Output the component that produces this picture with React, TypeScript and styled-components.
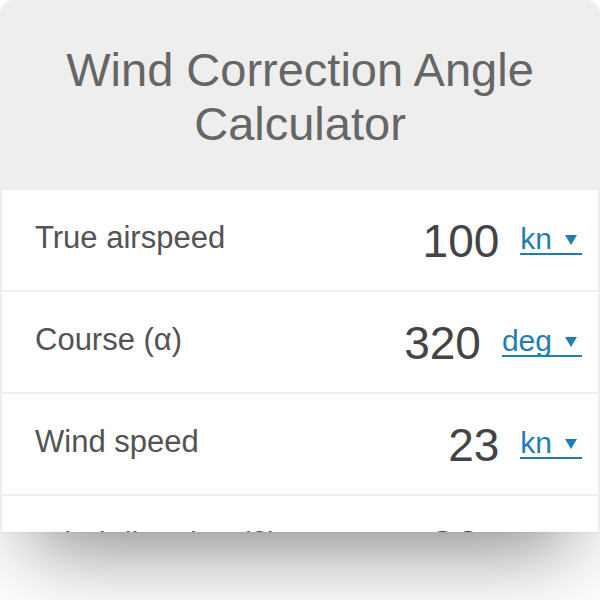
import React from 'react'
import styled, { createGlobalStyle } from 'styled-components'

const GlobalStyle = createGlobalStyle`
  html, body {
    margin: 0;
    padding: 0;
    background: #ffffff;
  }
  body {
    font-family: "Liberation Sans", Arial, sans-serif;
  }
`

const Page = styled.div`
  width: 600px;
  height: 600px;
  overflow: hidden;
  background: #ffffff;
`

const Card = styled.div`
  height: 532px;
  overflow: hidden;
  background: #eeeeee;
  border-radius: 15px 15px 0 0;
  box-shadow: 0 0 2px rgba(0, 0, 0, 0.08), 0 44px 80px -30px rgba(0, 0, 0, 0.5);
`

const Header = styled.div`
  height: 190px;
  display: flex;
  align-items: center;
  justify-content: center;
  padding: 0 40px;
  box-sizing: border-box;
`

const Title = styled.h1`
  margin: 0;
  padding-top: 3px;
  font-weight: normal;
  font-size: 47px;
  line-height: 54px;
  color: #666666;
  text-align: center;
`

const Rows = styled.div`
  display: flex;
  flex-direction: column;
  gap: 2px;
  padding: 0 2px;
`

const Row = styled.div`
  height: 100px;
  background: #ffffff;
  display: flex;
  align-items: center;
  padding: 0 16px 0 33px;
`

const Label = styled.div`
  flex: 1;
  font-size: 31px;
  color: #535353;
  padding-bottom: 4px;
`

const Value = styled.div`
  font-size: 46px;
  color: #444444;
  margin-right: 21px;
  padding-top: 2px;
`

const UnitLink = styled.a`
  display: inline-flex;
  align-items: center;
  font-size: 30px;
  line-height: 26px;
  color: #1d7eb6;
  border-bottom: 2px solid #1d7eb6;
  padding-bottom: 1px;
  cursor: pointer;
`

const Caret = styled.svg`
  width: 12px;
  height: 10px;
  margin: 0 5px 0 13px;
  position: relative;
  top: 1px;
`

type Field = {
  label: string
  value: string
  unit: string
}

const fields: Field[] = [
  { label: 'True airspeed', value: '100', unit: 'kn' },
  { label: 'Course (α)', value: '320', unit: 'deg' },
  { label: 'Wind speed', value: '23', unit: 'kn' },
  { label: 'Wind direction (β)', value: '30', unit: 'deg' },
]

export default function App() {
  return (
    <Page>
      <GlobalStyle />
      <Card>
        <Header>
          <Title>Wind Correction Angle Calculator</Title>
        </Header>
        <Rows>
          {fields.map((f) => (
            <Row key={f.label}>
              <Label>{f.label}</Label>
              <Value>{f.value}</Value>
              <UnitLink>
                {f.unit}
                <Caret viewBox="0 0 12 10">
                  <polygon points="0,0 12,0 6,10" fill="#1d7eb6" />
                </Caret>
              </UnitLink>
            </Row>
          ))}
        </Rows>
      </Card>
    </Page>
  )
}
